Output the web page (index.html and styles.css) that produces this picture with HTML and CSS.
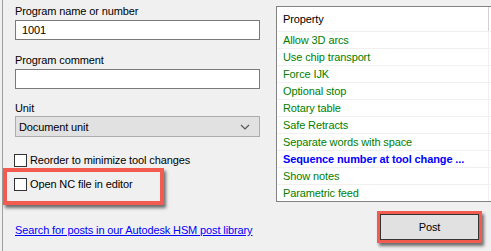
FILE: index.html
```html
<!DOCTYPE html>
<html>
<head>
<meta charset="utf-8">
<link rel="stylesheet" href="styles.css">
</head>
<body>
<div class="page">
  <div class="left">
    <div class="label first">Program name or number</div>
    <div class="input">1001</div>
    <div class="label">Program comment</div>
    <div class="input"></div>
    <div class="label unit">Unit</div>
    <div class="select"><span>Document unit</span>
      <svg width="10" height="6" viewBox="0 0 10 6"><path d="M1 1 L5 5 L9 1" fill="none" stroke="#555" stroke-width="1.2"/></svg>
    </div>
    <div class="check first-check"><span class="box"></span>Reorder to minimize tool changes</div>
    <div class="highlight">
      <div class="check"><span class="box"></span>Open NC file in editor</div>
    </div>
    <a class="link" href="#">Search for posts in our Autodesk HSM post library</a>
  </div>
  <div class="right">
    <div class="table">
      <div class="row head"><span class="cell">Property</span><span class="cell2"></span></div>
      <div class="row"><span class="cell">Allow 3D arcs</span><span class="cell2"></span></div>
      <div class="row"><span class="cell">Use chip transport</span><span class="cell2"></span></div>
      <div class="row"><span class="cell">Force IJK</span><span class="cell2"></span></div>
      <div class="row"><span class="cell">Optional stop</span><span class="cell2"></span></div>
      <div class="row"><span class="cell">Rotary table</span><span class="cell2"></span></div>
      <div class="row"><span class="cell">Safe Retracts</span><span class="cell2"></span></div>
      <div class="row"><span class="cell">Separate words with space</span><span class="cell2"></span></div>
      <div class="row bold"><span class="cell">Sequence number at tool change ...</span><span class="cell2"></span></div>
      <div class="row"><span class="cell">Show notes</span><span class="cell2"></span></div>
      <div class="row"><span class="cell">Parametric feed</span><span class="cell2"></span></div>
    </div>
    <div class="btn-wrap">
      <div class="button">Post</div>
    </div>
  </div>
</div>
</body>
</html>
```
FILE: styles.css
```css
html, body {
  margin: 0;
  padding: 0;
  background: #f0f0f0;
  width: 491px;
  height: 251px;
  overflow: hidden;
  font-family: "Liberation Sans", Arial, sans-serif;
  font-size: 11px;
  letter-spacing: -0.12px;
  color: #000;
}
.page {
  display: flex;
  height: 251px;
  width: 491px;
  overflow: hidden;
}
.left {
  flex: none;
  margin-left: 2px;
  border-left: 1px solid #a0a0a0;
  padding-left: 12px;
  width: 245px;
  display: flex;
  flex-direction: column;
}
.label {
  height: 16px;
  line-height: 16px;
  margin-top: 12px;
}
.label.first {
  margin-top: 3px;
}
.label.unit {
  margin-top: 11px;
}
.input {
  margin-top: 1px;
  height: 18px;
  border: 1px solid #7a7a7a;
  background: #fff;
  line-height: 18px;
  padding-left: 6px;
}
.select {
  height: 19px;
  border: 1px solid #adadad;
  background: #e1e1e1;
  display: flex;
  align-items: center;
  justify-content: space-between;
  padding: 0 9px 0 3px;
}
.check {
  display: flex;
  align-items: center;
  height: 16px;
  line-height: 16px;
}
.first-check {
  margin-top: 15px;
  margin-left: -1px;
}
.box {
  flex: none;
  width: 11px;
  height: 11px;
  border: 1px solid #333;
  background: #fff;
  margin-right: 3px;
}
.highlight {
  margin-left: -12px;
  width: 146px;
  height: 25px;
  border: 4px solid #f25b4f;
  box-shadow: 2px 3px 3px rgba(0,0,0,0.55);
  padding: 4px 0 0 7px;
}
.link {
  margin-top: 17px;
  color: #0000ff;
  text-decoration: underline;
  line-height: 16px;
  white-space: nowrap;
  align-self: flex-start;
}
.right {
  flex: none;
  margin-left: 16px;
  display: flex;
  flex-direction: column;
}
.table {
  margin-top: 6px;
  width: 260px;
  border: 1px solid #828282;
  background: #fff;
}
.row {
  display: flex;
  height: 16px;
  border-bottom: 1px solid #f0f0f0;
  line-height: 16px;
  color: #008000;
}
.row:last-child {
  border-bottom: none;
}
.row.head {
  height: 24px;
  line-height: 24px;
  color: #000;
}
.row.bold {
  color: #0000ff;
  font-weight: bold;
}
.cell {
  flex: none;
  width: 205px;
  padding-left: 6px;
  white-space: nowrap;
  overflow: hidden;
  border-right: 1px solid #f0f0f0;
}
.head .cell {
  border-right: 1px solid #d0d0d0;
}
.btn-wrap {
  margin-top: 9px;
  margin-left: 101px;
  width: 97px;
  border: 4px solid #f25b4f;
  box-shadow: 2px 3px 3px rgba(0,0,0,0.55);
}
.button {
  height: 24px;
  border: 1px solid #333;
  background: #e1e1e1;
  text-align: center;
  line-height: 24px;
  margin: -1px;
}
```
